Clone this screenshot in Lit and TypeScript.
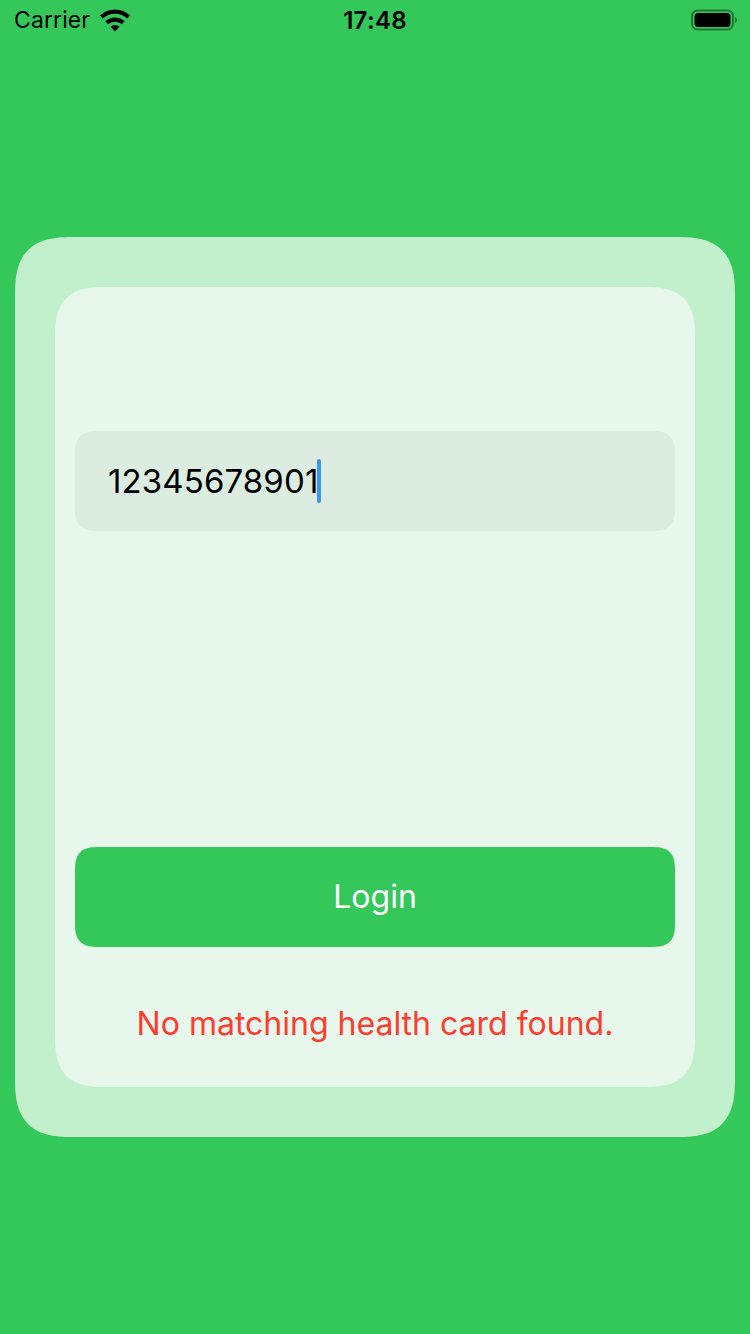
import { LitElement, html, css } from "lit";
import { customElement } from "lit/decorators.js";

@customElement("app-root")
export class AppRoot extends LitElement {
  static styles = css`
    :host { display: block; width: 750px; height: 1334px; background: #34c759; font-family: Inter, "Liberation Sans", sans-serif; overflow: hidden; }
    .status { height: 40px; display: grid; grid-template-columns: 1fr auto 1fr; align-items: center; color: #000; padding: 0 14px; box-sizing: border-box; }
    .left { display: flex; align-items: center; gap: 9px; font-size: 23px; line-height: 40px; letter-spacing: 0.1px; }
    .left svg { margin-top: -1px; }
    .time { font-size: 24px; font-weight: 600; letter-spacing: 0.3px; }
    .right { display: flex; justify-content: flex-end; align-items: center; margin-right: -1px; }
    .outer { margin: 197px 15px 0; height: 900px; padding: 50px 40px; box-sizing: border-box; background: #c2f0cd; border-radius: 60px; corner-shape: superellipse(1.5); }
    .inner { height: 800px; padding: 144px 20px 0; box-sizing: border-box; background: #e7f7eb; border-radius: 52px; corner-shape: superellipse(1.5); display: flex; flex-direction: column; }
    .input { height: 100px; flex: none; background: #dcece0; border-radius: 24px; corner-shape: superellipse(1.5); padding-left: 33px; display: flex; align-items: center; font-size: 33px; color: #000; letter-spacing: 0.12px; }
    .caret { width: 4px; height: 44px; background: #3d94f6; border-radius: 2px; margin-left: -1px; }
    .login { margin-top: 316px; height: 98px; padding-bottom: 2px; flex: none; background: #34c759; border-radius: 24px; corner-shape: superellipse(1.5); color: #fff; font-size: 32px; display: flex; align-items: center; justify-content: center; }
    .err { margin-top: 57px; text-align: center; color: #ff3b30; font-size: 32px; line-height: 40px; }
  `;
  render() {
    return html`
      <div class="status">
        <div class="left">Carrier
          <svg width="32" height="24" viewBox="0 0 32 24"><path d="M16 1.500c-5.800 0-11 2.200-15 5.900l2.800 3c3.200-2.900 7.500-4.700 12.200-4.700s9 1.800 12.200 4.700l2.800-3C27 3.700 21.800 1.500 16 1.500zM16 9.500c-3.700 0-7.100 1.400-9.700 3.800l2.900 3c1.800-1.600 4.200-2.600 6.800-2.600s5 1 6.800 2.600l2.900-3C23.100 10.900 19.700 9.500 16 9.500zM16 17c-1.700 0-3.300.7-4.500 1.800l4.500 4.700 4.500-4.700C19.300 17.700 17.700 17 16 17z" fill="#000"/></svg>
        </div>
        <div class="time">17:48</div>
        <div class="right">
          <svg width="46" height="22" viewBox="0 0 46 22">
            <rect x="1" y="1.500" width="41" height="19" rx="5.500" fill="none" stroke="#000" stroke-opacity=".4" stroke-width="2"/>
            <rect x="3.500" y="4" width="36" height="14" rx="3.500" fill="#000"/>
            <path d="M44 8c1.200.4 2 1.600 2 3s-.8 2.600-2 3z" fill="#000" fill-opacity=".4"/>
          </svg>
        </div>
      </div>
      <div class="outer">
        <div class="inner">
          <div class="input">12345678901<span class="caret"></span></div>
          <div class="login">Login</div>
          <div class="err">No matching health card found.</div>
        </div>
      </div>
    `;
  }
}
